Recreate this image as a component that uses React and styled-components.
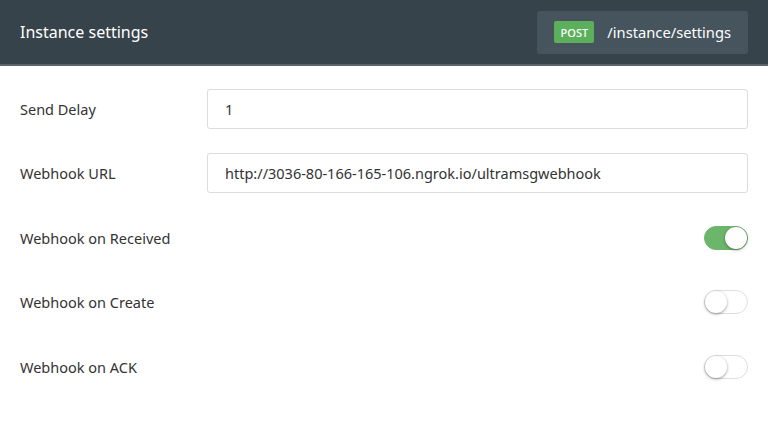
import React from "react";
import styled, { createGlobalStyle } from "styled-components";

const Global = createGlobalStyle`
  html, body { margin: 0; padding: 0; background: #fff; }
  body { font-family: "Noto Sans", "Open Sans", sans-serif; color: #333; }
  * { box-sizing: border-box; }
`;

const Header = styled.header`
  height: 66px;
  background: #37434b;
  border-bottom: 2px solid #59636b;
  display: flex;
  align-items: center;
  justify-content: space-between;
  padding: 0 20px;
`;

const Title = styled.h1`
  margin: 0;
  font-size: 16px;
  font-weight: 400;
  color: #fff;
`;

const Endpoint = styled.div`
  display: flex;
  align-items: center;
  gap: 13px;
  height: 43px;
  padding: 0 17px;
  background: #46545e;
  border-radius: 3px;
  color: #fff;
  font-size: 14.7px;
`;

const Method = styled.span`
  display: inline-flex;
  align-items: center;
  justify-content: center;
  width: 40px;
  height: 22px;
  background: #5cb05c;
  border-radius: 2px;
  font-size: 11px;
  font-weight: 500;
  color: #fff;
`;

const Form = styled.div`
  display: flex;
  flex-direction: column;
  padding: 23px 20px 0 20px;
`;

const Row = styled.div`
  display: flex;
  align-items: center;
  height: 40px;
  margin-bottom: ${(p) => (p.$toggle ? "24.5px" : "24px")};
`;

const Label = styled.label`
  width: 187px;
  flex-shrink: 0;
  font-size: 14.5px;
  color: #333;
`;

const Input = styled.input`
  flex: 1;
  height: 40px;
  border: 1px solid #dcdcdc;
  border-radius: 3px;
  padding: 0 17px;
  font-family: inherit;
  font-size: 14.5px;
  color: #333;
  outline: none;
`;

const Spacer = styled.div`
  flex: 1;
`;

const Track = styled.div`
  position: relative;
  width: 44px;
  height: 24px;
  border-radius: 12px;
  border: 1px solid ${(p) => (p.$on ? "#6cb66c" : "#dedede")};
  background: ${(p) => (p.$on ? "#6cb66c" : "#fff")};
`;

const Knob = styled.div`
  position: absolute;
  top: 0px;
  left: ${(p) => (p.$on ? "20px" : "0px")};
  width: 22px;
  height: 22px;
  border-radius: 50%;
  background: #fff;
  box-shadow: 0 1px 3px rgba(0, 0, 0, 0.4);
`;

const Toggle = ({ on }) => (
  <Track $on={on}>
    <Knob $on={on} />
  </Track>
);

export default function App() {
  return (
    <>
      <Global />
      <Header>
        <Title>Instance settings</Title>
        <Endpoint>
          <Method>POST</Method>
          <span>/instance/settings</span>
        </Endpoint>
      </Header>
      <Form>
        <Row>
          <Label>Send Delay</Label>
          <Input defaultValue="1" />
        </Row>
        <Row $toggle>
          <Label>Webhook URL</Label>
          <Input defaultValue="http://3036-80-166-165-106.ngrok.io/ultramsgwebhook" />
        </Row>
        <Row $toggle>
          <Label>Webhook on Received</Label>
          <Spacer />
          <Toggle on />
        </Row>
        <Row $toggle>
          <Label>Webhook on Create</Label>
          <Spacer />
          <Toggle />
        </Row>
        <Row $toggle>
          <Label>Webhook on ACK</Label>
          <Spacer />
          <Toggle />
        </Row>
      </Form>
    </>
  );
}
